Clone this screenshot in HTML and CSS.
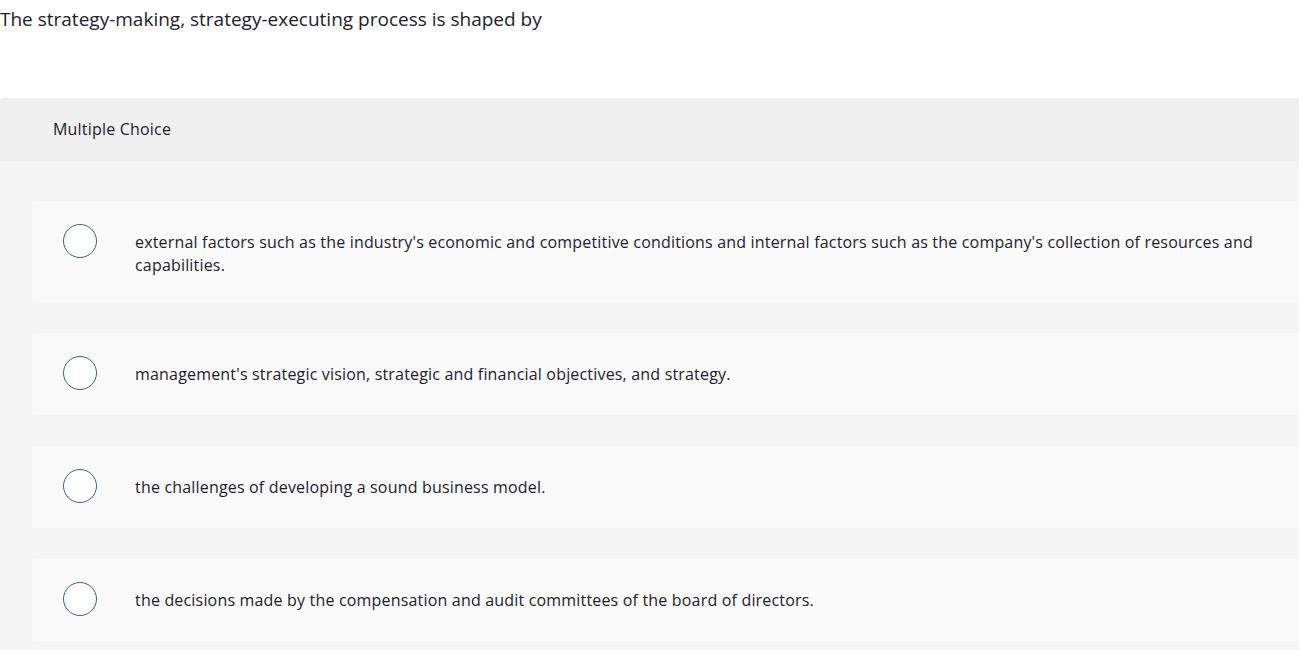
FILE: index.html
```html
<!DOCTYPE html>
<html>
<head>
<meta charset="utf-8">
<link rel="stylesheet" href="styles.css">
</head>
<body>
<div class="question">The strategy-making, strategy-executing process is shaped by</div>
<div class="panel">
  <div class="panel-head">Multiple Choice</div>
  <div class="options">
    <div class="option">
      <span class="radio"></span>
      <div class="opt-text">external factors such as the industry's economic and competitive conditions and internal factors such as the company's collection of resources and capabilities.</div>
    </div>
    <div class="option">
      <span class="radio"></span>
      <div class="opt-text">management's strategic vision, strategic and financial objectives, and strategy.</div>
    </div>
    <div class="option">
      <span class="radio"></span>
      <div class="opt-text">the challenges of developing a sound business model.</div>
    </div>
    <div class="option">
      <span class="radio"></span>
      <div class="opt-text">the decisions made by the compensation and audit committees of the board of directors.</div>
    </div>
  </div>
</div>
</body>
</html>
```
FILE: styles.css
```css
html, body {
  margin: 0;
  padding: 0;
  background: #ffffff;
  overflow: hidden;
}
body {
  font-family: "Open Sans", Lato, sans-serif;
  color: #1e2030;
  width: 1310px;
}
.question {
  font-size: 19px;
  line-height: 24px;
  padding-top: 7px;
  height: 91px;
}
.panel {
  background: #f5f5f5;
  border-radius: 4px 0 0 0;
  overflow: hidden;
  min-height: 560px;
}
.panel-head {
  background: #f0f0f0;
  height: 61px;
  padding: 0 0 2px 53px;
  display: flex;
  align-items: center;
  font-size: 16px;
  letter-spacing: 0.2px;
}
.options {
  display: flex;
  flex-direction: column;
  gap: 31px;
  padding: 40px 0 0 32px;
}
.option {
  background: #fafafa;
  border-radius: 4px;
  display: flex;
  align-items: flex-start;
  padding: 23px 40px 24px 31px;
  min-height: 35px;
}
.radio {
  flex: none;
  width: 32px;
  height: 32px;
  border: 1.5px solid #34628f;
  border-radius: 50%;
  background: #ffffff;
}
.opt-text {
  margin-left: 38px;
  padding: 7px 0 1px;
  font-size: 16px;
  line-height: 23px;
  letter-spacing: 0.18px;
  max-width: 1140px;
}
```
